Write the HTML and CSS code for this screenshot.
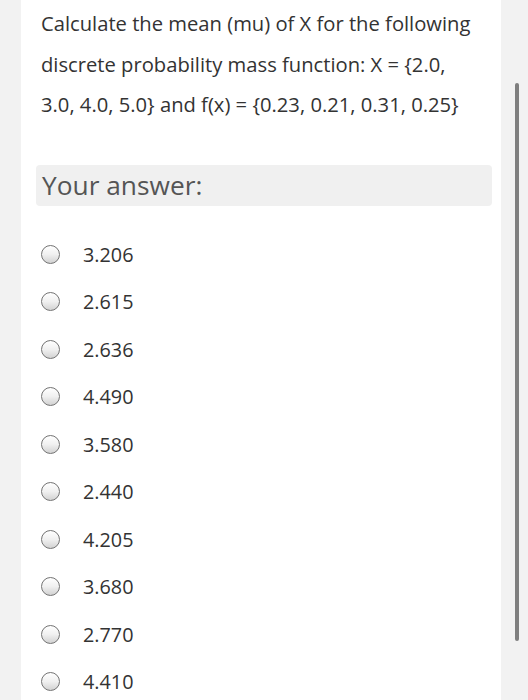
FILE: index.html
```html
<!DOCTYPE html>
<html>
<head>
<meta charset="utf-8">
<link rel="stylesheet" href="styles.css">
</head>
<body>
<div class="page">
  <div class="card">
    <p class="question">Calculate the mean (mu) of X for the following discrete probability mass function: X = {2.0, 3.0, 4.0, 5.0} and f(x) = {0.23, 0.21, 0.31, 0.25}</p>
    <div class="answer-label">Your answer:</div>
    <ul class="options">
      <li class="option"><span class="radio"></span><span class="val">3.206</span></li>
      <li class="option"><span class="radio"></span><span class="val">2.615</span></li>
      <li class="option"><span class="radio"></span><span class="val">2.636</span></li>
      <li class="option"><span class="radio"></span><span class="val">4.490</span></li>
      <li class="option"><span class="radio"></span><span class="val">3.580</span></li>
      <li class="option"><span class="radio"></span><span class="val">2.440</span></li>
      <li class="option"><span class="radio"></span><span class="val">4.205</span></li>
      <li class="option"><span class="radio"></span><span class="val">3.680</span></li>
      <li class="option"><span class="radio"></span><span class="val">2.770</span></li>
      <li class="option"><span class="radio"></span><span class="val">4.410</span></li>
    </ul>
  </div>
  <div class="gutter"><div class="thumb"></div></div>
</div>
</body>
</html>
```
FILE: styles.css
```css
html, body {
  margin: 0;
  padding: 0;
  background: #f2f2f2;
  font-family: "Open Sans", "Noto Sans", sans-serif;
  color: #333;
  height: 700px;
  overflow: hidden;
}
.page {
  display: flex;
  height: 700px;
  padding-left: 21px;
}
.card {
  width: 480px;
  background: #fff;
  height: 700px;
  box-sizing: border-box;
  padding: 3px 9px 0 15px;
}
.question {
  margin: 0;
  padding: 0 10px 0 5px;
  font-size: 20.2px;
  line-height: 40.5px;
  color: #333;
}
.answer-label {
  margin-top: 40px;
  background: #f0f0f0;
  border-radius: 4px;
  height: 41px;
  line-height: 41px;
  padding-left: 6px;
  font-size: 26.3px;
  color: #555;
}
.options {
  list-style: none;
  margin: 25px 0 0 0;
  padding: 0;
}
.option {
  display: flex;
  align-items: center;
  height: 47.5px;
  padding-left: 5px;
}
.radio {
  width: 17px;
  height: 17px;
  border-radius: 50%;
  border: 1px solid #737373;
  background: linear-gradient(#ffffff 0%, #f0f0f0 50%, #d2d2d2 100%);
  box-sizing: content-box;
  flex: none;
}
.val {
  margin-left: 23px;
  font-size: 19.8px;
  color: #333;
}
.gutter {
  flex: 1;
  display: flex;
  justify-content: center;
  padding-top: 83px;
  padding-left: 5px;
}
.thumb {
  width: 4px;
  height: 558px;
  background: #7f7f7f;
  border-radius: 2px;
}
```
